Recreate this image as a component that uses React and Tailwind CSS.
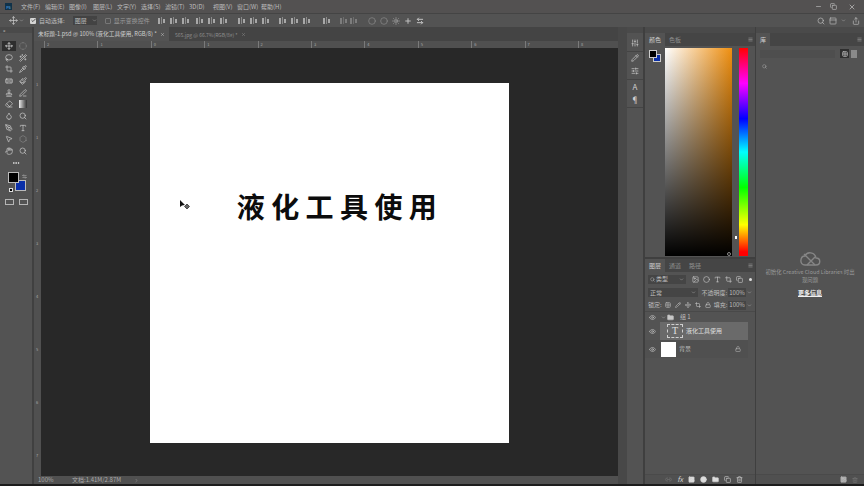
import React from "react";
import {
  Move, CircleDashed, Lasso, Wand2, Crop, Pipette, Bandage, Paintbrush, Stamp, PenLine, Eraser, Droplet, Search, PenTool, Type, MousePointer2, Hexagon, Hand,
  Ellipsis, ChevronDown, Share, PanelTop, Eye, Folder, Link2, Image as ImageIcon, Copy, Trash2, Lock, Menu, Check, X, Minus, Sliders, Pencil, SlidersHorizontal, ChevronRight, Grid2x2, Circle, Sun, Plus, ArrowLeftRight
} from "lucide-react";

const menus = ["文件(F)", "编辑(E)", "图像(I)", "图层(L)", "文字(Y)", "选择(S)", "滤镜(T)", "3D(D)", "视图(V)", "窗口(W)", "帮助(H)"];
const tools = [Move, CircleDashed, Lasso, Wand2, Crop, Pipette, Bandage, Paintbrush, Stamp, PenLine, Eraser, null, Droplet, Search, PenTool, Type, MousePointer2, Hexagon, Hand, Search];

function AlignIcon({ dim }) {
  return (
    <span className={dim ? "w-[8px] flex items-center justify-center gap-[1px] opacity-50" : "w-[8px] flex items-center justify-center gap-[1px]"}>
      <span className="w-[2px] h-[6px] bg-[#a8a8a8]" />
      <span className="w-[1px] h-[7px] bg-[#8a8a8a]" />
      <span className="w-[2px] h-[4px] bg-[#a8a8a8]" />
    </span>
  );
}

function AlignGroup({ n, className }) {
  return (
    <span className={className}>
      {Array.from({ length: n }).map((_, i) => <AlignIcon key={i} />)}
    </span>
  );
}

function Tab({ children, active }) {
  return (
    <div className={active ? "h-full px-[4px] flex items-center bg-[#535353] text-[#d0d0d0]" : "h-full px-[4px] flex items-center text-[#8f8f8f]"}>
      {children}
    </div>
  );
}

function Eyeb() {
  return <Eye size={7} strokeWidth={2} className="text-[#c8c8c8]" />;
}

export default function App() {
  return (
    <div className="w-[864px] h-[486px] overflow-hidden flex flex-col bg-[#535353] text-[#bdbdbd] text-[6px] leading-none font-['Noto_Sans_CJK_SC','Liberation_Sans',sans-serif]">
      {/* menu */}
      <div className="h-[13px] flex items-center pl-[5px] pr-[8px] bg-[#535151]">
        <div className="w-[7px] h-[7px] bg-[#10324a] text-[#5fb8f0] text-[4px] flex items-center justify-center">Ps</div>
        <div className="ml-[9px] flex gap-[6px]">
          {menus.map((m) => <span key={m} className="w-[18px] whitespace-nowrap">{m}</span>)}
        </div>
        <div className="ml-auto flex items-center gap-[8px] text-[#c8c8c8]">
          <Minus size={7} />
          <Copy size={7} />
          <X size={8} className="ml-[3px]" />
        </div>
      </div>
      {/* options */}
      <div className="h-[14px] flex items-center pl-[9px] pr-[4px] bg-[#535353] border-t border-[#444444]">
        <Move size={9} className="text-[#c8c8c8]" />
        <ChevronDown size={5} className="ml-[1px]" />
        <span className="ml-[6px] w-[6px] h-[6px] bg-[#d5d5d5] rounded-[1px] flex items-center justify-center"><Check size={5} strokeWidth={4} className="text-[#333333]" /></span>
        <span className="ml-[3px]">自动选择:</span>
        <span className="ml-[8px] w-[24px] h-[9px] bg-[#434343] flex items-center pl-[2px]">图层<ChevronDown size={5} className="ml-auto" /></span>
        <span className="ml-[8px] w-[6px] h-[6px] border border-[#777777] rounded-[1px]" />
        <span className="ml-[3px] w-[32px] whitespace-nowrap text-[#9c9c9c]">显示变换控件</span>
        <AlignGroup n={3} className="ml-[12px] flex gap-[4px]" />
        <AlignGroup n={3} className="ml-[6px] flex gap-[4px]" />
        <AlignGroup n={3} className="ml-[10px] flex gap-[4px]" />
        <AlignGroup n={3} className="ml-[9px] flex gap-[4px]" />
        <AlignGroup n={1} className="ml-[12px] flex" />
        <span className="ml-[9px] flex gap-[2px]"><AlignIcon dim /><AlignIcon dim /></span>
        <span className="ml-[10px] flex items-center gap-[4px] text-[#8d8d8d]">
          <Circle size={8} /><Circle size={8} />
          <Sun size={8} className="text-[#b0b0b0]" /><Plus size={8} strokeWidth={3} className="text-[#c0c0c0]" /><ArrowLeftRight size={8} strokeWidth={3} className="text-[#c0c0c0]" />
        </span>
        <span className="ml-auto flex items-center gap-[4px] text-[#c0c0c0]">
          <Search size={8} />
          <PanelTop size={8} />
          <ChevronDown size={5} />
          <Share size={8} className="ml-[2px]" />
        </span>
      </div>
      {/* main */}
      <div className="flex-1 flex min-h-0">
        {/* toolbar */}
        <div className="w-[32px] bg-[#535353] flex flex-col items-center">
          <div className="w-full h-[6px] bg-[#4a4a4a] text-[#cccccc] text-[5px] pl-[3px] leading-[6px]">»</div>
          <div className="mt-[7px] w-[28px] grid grid-cols-2 auto-rows-[11.7px] justify-items-center items-center">
            {tools.map((T, i) => (
              <div key={i} className={i === 0 ? "w-[14px] h-[10px] bg-[#2e2e2e] flex items-center justify-center text-[#e8e8e8]" : "w-[14px] h-[10px] flex items-center justify-center text-[#cfcfcf]"}>
                {T ? <T size={8} strokeWidth={2} className={i === 1 || i === 17 ? "text-[#8a8a8a]" : ""} /> : <span className="w-[8px] h-[8px] bg-gradient-to-r from-[#eeeeee] to-[#333333]" />}
              </div>
            ))}
          </div>
          <Ellipsis size={8} strokeWidth={3} className="mt-[2px] text-[#dddddd]" />
          <div className="mt-[5px] w-[20px] h-[21px] relative">
            <span className="absolute left-[9px] top-[8px] w-[11px] h-[11px] bg-[#0a2fa8] border border-[#bbbbbb]" />
            <span className="absolute left-[2px] top-[0px] w-[11px] h-[11px] bg-black border border-[#bbbbbb]" />
            <ArrowLeftRight size={5} className="absolute left-[16px] top-[2px] text-[#cccccc]" />
            <span className="absolute left-[3px] top-[16px] w-[4px] h-[4px] bg-black border border-[#dddddd]" />
          </div>
          <div className="mt-[6px] flex gap-[5px]">
            <span className="w-[9px] h-[6px] border border-[#b5b5b5]" />
            <span className="w-[9px] h-[6px] border border-[#b5b5b5]" />
          </div>
        </div>
        <div className="w-[2px] bg-[#404040]" />
        {/* center */}
        <div className="w-[584px] flex flex-col">
          <div className="h-[14px] bg-[#444444] flex items-center whitespace-nowrap">
            <Tab active>
              <span className="w-[121px] text-[5.7px]">未标题-1.psd @ 100% (液化工具使用, RGB/8) *</span>
              <X size={5} className="ml-[1px]" />
            </Tab>
            <Tab>
              <span className="ml-[2px] w-[64px] text-[5px]">565.jpg @ 66.7%(RGB/8#) *</span>
              <X size={5} className="ml-[2px]" />
            </Tab>
          </div>
          <div className="h-[7px] bg-[#505050] flex pl-[10px] text-[4px] text-[#a8a8a8]">
            {["2", "1", "0", "1", "2", "3", "4", "5", "6", "7", "8"].map((n, i) => (
              <div key={i} className="w-[53.4px] shrink-0 border-l border-[#7a7a7a] pl-[2px] pt-[1px]">{n}</div>
            ))}
          </div>
          <div className="flex-1 flex min-h-0">
            <div className="w-[7px] bg-[#505050] flex flex-col pt-[34px] text-[4px] text-[#a8a8a8] pl-[2px]">
              {["1", "1", "2", "3", "4", "5", "6", "7"].map((n, i) => (
                <div key={i} className="h-[53px] shrink-0">{n}</div>
              ))}
            </div>
            <div className="flex-1 bg-[#282828] flex items-center justify-center pt-[2px]">
              <div className="w-[359px] h-[360px] bg-white relative flex items-center justify-center pb-[114px] pl-[21px]">
                <span className="text-[28px] font-bold text-[#0c0c0c] tracking-[6.4px] leading-none whitespace-nowrap">液化工具使用</span>
                <svg className="absolute left-[29px] top-[116px]" width="12" height="12" viewBox="0 0 12 12">
                  <path d="M1 1 L1 8 L3 6.5 L6 6 Z" fill="#111111" />
                  <path d="M8 5 L10.5 7.5 L8 10 L5.5 7.5 Z" fill="#666666" stroke="#222222" strokeWidth="0.7" />
                </svg>
              </div>
            </div>
          </div>
          <div className="h-[8px] bg-[#505050] flex items-center text-[#aaaaaa] pl-[4px] whitespace-nowrap">
            <span className="w-[34px]">100%</span>
            <span className="w-[62px]">文档:1.41M/2.87M</span>
            <ChevronRight size={5} />
          </div>
        </div>
        {/* scroll strip */}
        <div className="w-[9px] bg-[#484848]" />
        {/* dock */}
        <div className="w-[16px] flex flex-col items-center bg-[#535353] text-[#d0d0d0]">
          <div className="w-full h-[6px] bg-[#4a4a4a]" />
          <Sliders size={8} className="mt-[6px]" />
          <div className="mt-[4px] w-full border-t border-[#444444]" />
          <Pencil size={8} className="mt-[2px]" />
          <SlidersHorizontal size={8} className="mt-[5px]" />
          <div className="mt-[4px] w-full border-t border-[#444444]" />
          <span className="mt-[3px] text-[8px] leading-none">A</span>
          <span className="mt-[5px] text-[8px] leading-none">¶</span>
          <div className="mt-[3px] w-full border-t border-[#444444]" />
        </div>
        <div className="w-[2px] bg-[#3f3f3f]" />
        {/* panels */}
        <div className="w-[110px] flex flex-col">
          <div className="h-[6px] bg-[#4a4a4a]" />
          <div className="h-[13px] bg-[#454545] flex items-center pr-[2px]">
            <Tab active>颜色</Tab>
            <Tab>色板</Tab>
            <Menu size={5} className="ml-auto" />
          </div>
          <div className="h-[211px] flex pt-[2px] pl-[4px]">
            <div className="w-[16px] h-[16px] relative">
              <span className="absolute left-[4px] top-[6px] w-[8px] h-[8px] bg-[#0a2fa8] border border-[#cccccc]" />
              <span className="absolute left-0 top-[2px] w-[8px] h-[8px] bg-black border border-[#cccccc]" />
            </div>
            <div className="w-[67px] h-[208px] relative bg-[linear-gradient(to_bottom,transparent,#000000),linear-gradient(to_right,#ffffff,#ef8f10)]">
              <span className="absolute right-[1px] bottom-[0px] w-[4px] h-[4px] rounded-full border border-[#8a8a8a]" />
              <span className="absolute right-[-5px] bottom-[17px] w-[2px] h-[3px] bg-white" />
            </div>
            <div className="ml-[7px] w-[9px] h-[208px] bg-[linear-gradient(to_bottom,#ff0000_0%,#ff00ff_17%,#0000ff_34%,#00ffff_50%,#00ff00_67%,#ffff00_85%,#ff0000_98%)]" />
          </div>
          <div className="h-[2px] bg-[#3f3f3f]" />
          {/* layers */}
          <div className="h-[13px] bg-[#454545] flex items-center pr-[2px]">
            <Tab active>图层</Tab>
            <Tab>通道</Tab>
            <Tab>路径</Tab>
            <Menu size={5} className="ml-auto" />
          </div>
          <div className="h-[14px] flex items-center px-[3px] gap-[2px]">
            <span className="w-[38px] h-[9px] bg-[#454545] flex items-center px-[2px] gap-[1px]"><Search size={5} />类型<ChevronDown size={5} className="ml-auto" /></span>
            <span className="ml-[4px] flex gap-[4px] text-[#cfcfcf]">
              <ImageIcon size={7} /><Circle size={7} /><Type size={7} /><Crop size={7} /><Copy size={7} />
            </span>
            <span className="ml-auto w-[3px] h-[3px] rounded-full bg-[#e0e0e0]" />
          </div>
          <div className="h-[13px] flex items-center px-[3px]">
            <span className="w-[50px] h-[9px] bg-[#454545] flex items-center px-[2px]">正常<ChevronDown size={5} className="ml-auto" /></span>
            <span className="ml-[4px] whitespace-nowrap">不透明度:</span>
            <span className="ml-[1px] w-[18px] h-[9px] bg-[#454545] flex items-center pl-[1px] whitespace-nowrap">100%</span>
            <ChevronDown size={5} className="ml-[1px]" />
          </div>
          <div className="h-[12px] flex items-center px-[3px] whitespace-nowrap">
            锁定:
            <span className="ml-[3px] flex gap-[4px] text-[#cfcfcf]"><Grid2x2 size={6} /><Pencil size={6} /><Move size={6} /><Crop size={6} /><Lock size={6} /></span>
            <span className="ml-[3px]">填充:</span>
            <span className="ml-[1px] w-[18px] h-[9px] bg-[#454545] flex items-center pl-[1px]">100%</span>
            <ChevronDown size={5} className="ml-[1px]" />
          </div>
          <div className="h-[11px] flex items-center pl-[4px] border-t border-[#494949]">
            <Eyeb />
            <span className="ml-[5px] flex items-center gap-[1px]"><ChevronDown size={5} /><Folder size={7} fill="#c8c8c8" /></span>
            <span className="ml-[6px]">组 1</span>
          </div>
          <div className="h-[18px] flex items-center pl-[4px] bg-[#535353]">
            <Eyeb />
            <div className="ml-[4px] h-full flex-1 mr-[7px] bg-[#6a6a6a] flex items-center pl-[7px] text-[#e0e0e0]">
              <span className="w-[16px] h-[14px] border border-dashed border-[#d0d0d0] flex items-center justify-center text-[10px] font-['Liberation_Serif',serif]">T</span>
              <span className="ml-[3px]">液化工具使用</span>
            </div>
          </div>
          <div className="h-[18px] flex items-center pl-[4px] bg-[#505050] mr-[7px]">
            <Eyeb />
            <span className="ml-[5px] w-[15px] h-[15px] bg-white" />
            <span className="ml-[3px]">背景</span>
            <Lock size={6} className="ml-auto mr-[7px]" />
          </div>
          <div className="flex-1" />
          <div className="h-[10px] flex items-center justify-end pr-[12px] gap-[5px] bg-[#505050] text-[#d0d0d0] border-t border-[#4a4a4a]">
            <Link2 size={7} className="text-[#777777]" />
            <span className="italic text-[7px] leading-none">fx</span>
            <ImageIcon size={7} fill="#dddddd" />
            <Circle size={7} fill="#dddddd" />
            <Folder size={7} fill="#dddddd" />
            <Copy size={7} />
            <Trash2 size={7} />
          </div>
        </div>
        <div className="w-[1px] bg-[#3f3f3f]" />
        {/* libraries */}
        <div className="flex-1 flex flex-col">
          <div className="h-[6px] bg-[#4a4a4a]" />
          <div className="h-[13px] bg-[#454545] flex items-center pr-[2px]">
            <Tab active>库</Tab>
            <Menu size={5} className="ml-auto" />
          </div>
          <div className="h-[15px] flex items-center pl-[4px] pr-[4px]">
            <span className="w-[75px] h-[8px] bg-[#4e4e4e]" />
            <span className="ml-[5px] w-[9px] h-[9px] bg-[#2e2e2e] flex items-center justify-center"><Grid2x2 size={6} strokeWidth={3} /></span>
            <span className="ml-[2px] w-[6px] h-[8px] bg-[#8a8a8a]" />
          </div>
          <div className="h-[9px] mt-[1px] flex items-center pl-[6px] text-[#707070]"><Search size={5} className="text-[#b5b5b5]" /></div>
          <div className="mt-[178px] flex flex-col items-center text-center text-[#9a9a9a]">
            <svg width="24" height="18" viewBox="0 0 24 18" fill="none" stroke="#868686" strokeWidth="1.4">
              <path d="M7 16 H18 C23 16 23 9 18 9 C17 3 9 2 7 7 C2 7 1 16 7 16 Z" />
              <path d="M6 5 L17 16 M9 16 L17 8" />
            </svg>
            <div className="mt-[1px] text-[5.4px] leading-[8px] whitespace-nowrap">初始化 Creative Cloud Libraries 时出<br />现问题</div>
            <div className="mt-[6px] text-[#f0f0f0] font-bold underline">更多信息</div>
          </div>
          <div className="flex-1" />
          <div className="h-[10px] flex items-center justify-end pr-[6px] gap-[5px] bg-[#505050] border-t border-[#4a4a4a]">
            <ImageIcon size={7} fill="#aaaaaa" />
            <Trash2 size={6} className="text-[#777777]" />
          </div>
        </div>
      </div>
      <div className="h-[2px] bg-[#1c1c1c]" />
    </div>
  );
}
